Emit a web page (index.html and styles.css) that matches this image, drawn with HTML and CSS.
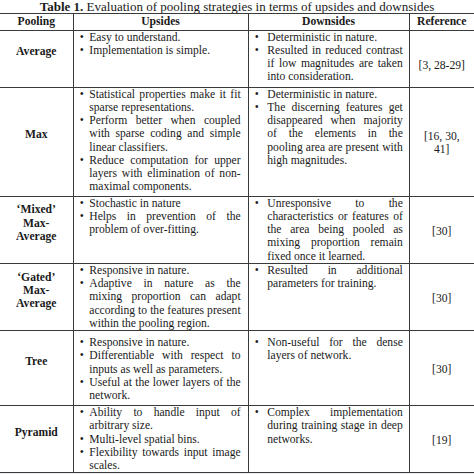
FILE: index.html
```html
<!DOCTYPE html>
<html>
<head>
<meta charset="utf-8">
<link rel="stylesheet" href="styles.css">
</head>
<body>
<div class="page">
  <div class="title"><b>Table 1.</b> Evaluation of pooling strategies in terms of upsides and downsides</div>
  <table class="tbl">
    <colgroup>
      <col class="c-pool"><col class="c-up"><col class="c-down"><col class="c-ref">
    </colgroup>
    <thead>
      <tr class="r-head">
        <th>Pooling</th><th>Upsides</th><th>Downsides</th><th>Reference</th>
      </tr>
    </thead>
    <tbody>
      <tr class="r-avg">
        <td class="name">Average</td>
        <td class="up">
          <div class="li"><span class="b">•</span><span class="t">Easy to understand.</span></div>
          <div class="li"><span class="b">•</span><span class="t">Implementation is simple.</span></div>
        </td>
        <td class="down">
          <div class="li"><span class="b">•</span><span class="t">Deterministic in nature.</span></div>
          <div class="li"><span class="b">•</span><span class="t">Resulted in reduced contrast if low magnitudes are taken into consideration.</span></div>
        </td>
        <td class="ref ref-low">[3, 28-29]</td>
      </tr>
      <tr class="r-max">
        <td class="name">Max</td>
        <td class="up">
          <div class="li"><span class="b">•</span><span class="t">Statistical properties make it fit sparse representations.</span></div>
          <div class="li"><span class="b">•</span><span class="t">Perform better when coupled with sparse coding and simple linear classifiers.</span></div>
          <div class="li"><span class="b">•</span><span class="t">Reduce computation for upper layers with elimination of non-maximal components.</span></div>
        </td>
        <td class="down">
          <div class="li"><span class="b">•</span><span class="t">Deterministic in nature.</span></div>
          <div class="li"><span class="b">•</span><span class="t">The discerning features get disappeared when majority of the elements in the pooling area are present with high magnitudes.</span></div>
        </td>
        <td class="ref">[16, 30,<br>41]</td>
      </tr>
      <tr class="r-mixed">
        <td class="name">‘Mixed’<br>Max-<br>Average</td>
        <td class="up">
          <div class="li"><span class="b">•</span><span class="t">Stochastic in nature</span></div>
          <div class="li"><span class="b">•</span><span class="t">Helps in prevention of the problem of over-fitting.</span></div>
        </td>
        <td class="down">
          <div class="li"><span class="b">•</span><span class="t">Unresponsive to the characteristics or features of the area being pooled as mixing proportion remain fixed once it learned.</span></div>
        </td>
        <td class="ref">[30]</td>
      </tr>
      <tr class="r-gated">
        <td class="name">‘Gated’<br>Max-<br>Average</td>
        <td class="up">
          <div class="li"><span class="b">•</span><span class="t">Responsive in nature.</span></div>
          <div class="li"><span class="b">•</span><span class="t">Adaptive in nature as the mixing proportion can adapt according to the features present within the pooling region.</span></div>
        </td>
        <td class="down">
          <div class="li"><span class="b">•</span><span class="t">Resulted in additional parameters for training.</span></div>
        </td>
        <td class="ref">[30]</td>
      </tr>
      <tr class="r-tree">
        <td class="name">Tree</td>
        <td class="up">
          <div class="li"><span class="b">•</span><span class="t">Responsive in nature.</span></div>
          <div class="li"><span class="b">•</span><span class="t">Differentiable with respect to inputs as well as parameters.</span></div>
          <div class="li"><span class="b">•</span><span class="t">Useful at the lower layers of the network.</span></div>
        </td>
        <td class="down">
          <div class="li"><span class="b">•</span><span class="t">Non-useful for the dense layers of network.</span></div>
        </td>
        <td class="ref">[30]</td>
      </tr>
      <tr class="r-pyr">
        <td class="name">Pyramid</td>
        <td class="up">
          <div class="li"><span class="b">•</span><span class="t">Ability to handle input of arbitrary size.</span></div>
          <div class="li"><span class="b">•</span><span class="t">Multi-level spatial bins.</span></div>
          <div class="li"><span class="b">•</span><span class="t">Flexibility towards input image scales.</span></div>
        </td>
        <td class="down">
          <div class="li"><span class="b">•</span><span class="t">Complex implementation during training stage in deep networks.</span></div>
        </td>
        <td class="ref">[19]</td>
      </tr>
    </tbody>
  </table>
  <div class="foot"></div>
</div>
</body>
</html>
```
FILE: styles.css
```css
html, body {
  margin: 0;
  padding: 0;
  background: #ffffff;
  overflow: hidden;
}
body {
  font-family: "Liberation Serif", "Times New Roman", serif;
  color: #1a1a1a;
}
.page {
  width: 474px;
  height: 474px;
  display: flex;
  flex-direction: column;
}
.title {
  flex: none;
  font-size: 13px;
  line-height: 12px;
  height: 12px;
  padding-top: 1px;
  text-align: center;
  white-space: nowrap;
}
.tbl {
  flex: none;
  width: 474px;
  border-collapse: collapse;
  table-layout: fixed;
  font-size: 11.6px;
  line-height: 13.25px;
}
.foot {
  flex: 1;
  background: #ececee;
}
.c-pool { width: 73px; }
.c-up { width: 175px; }
.c-down { width: 161px; }
.c-ref { width: 65px; }

.tbl th, .tbl td {
  border: 1px solid #3a3a3a;
  padding: 0;
}
.tbl tr > :first-child { border-left: none; }
.tbl tr > :last-child { border-right: none; }

.tbl th {
  font-weight: bold;
  text-align: center;
  vertical-align: middle;
}
.name {
  font-weight: bold;
  text-align: center;
  vertical-align: middle;
  padding-bottom: 13px !important;
}
.up, .down {
  vertical-align: top;
}
.up { padding: 0 6.9px 0 6.2px !important; }
.down { padding: 0 5.7px 0 6.2px !important; }
.ref {
  text-align: center;
  vertical-align: middle;
  padding: 3px 7px 0 7px !important;
}
.ref-low { padding-top: 14px !important; }

.li {
  display: flex;
}
.b {
  flex: none;
  width: 9.6px;
}
.down .b { width: 12.6px; }
.t {
  flex: 1;
  min-width: 0;
  text-align: justify;
}

.r-head { height: 16.5px; }
.r-avg { height: 57px; }
.r-max { height: 109px; }
.r-mixed { height: 67px; }
.r-gated { height: 66px; }
.r-tree { height: 75px; }
.r-tree .up, .r-tree .down { padding-top: 5px !important; }
.r-pyr { height: 66px; }
```
